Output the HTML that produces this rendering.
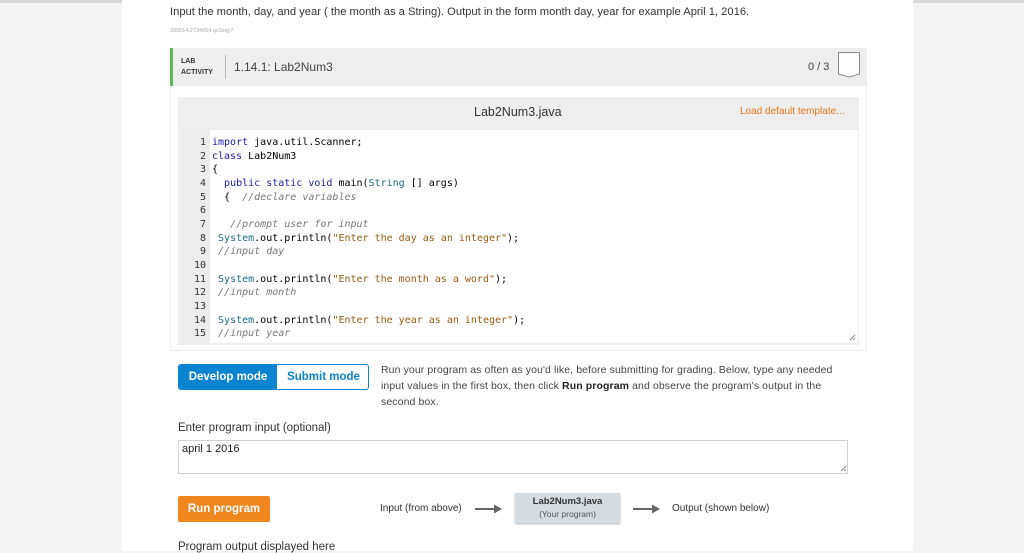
<!DOCTYPE html>
<html><head><meta charset="utf-8"><style>
body{margin:0;width:1024px;height:551px;overflow:hidden;background:#f4f4f4;font-family:"Liberation Sans",sans-serif;position:relative}
.page{position:absolute;left:122px;top:0;width:791px;height:551px;background:#fff}
.topbar{position:absolute;left:0;top:0;width:1024px;height:3px;background:#d8d8d8}
.a{position:absolute;white-space:nowrap}
.code{font-family:"DejaVu Sans Mono","Liberation Mono",monospace;font-size:10px;line-height:13.65px;color:#000}
.kw{color:#1a1aa6}.ty{color:#1b6b82}.st{color:#9a5a12}.cm{color:#777;font-style:italic}
</style></head><body>
<div class="topbar"></div>
<div class="page"></div>
<div class="a" style="left:170px;top:6px;font-size:11.2px;color:#333">Input the month, day, and year ( the month as a String). Output in the form month day, year for example April 1, 2016.</div>
<div class="a" style="left:170px;top:28px;font-size:5.5px;color:#aaa">395614.2734054.qx3zqy7</div>
<div class="a" style="left:170px;top:48px;width:697px;height:38px;background:#eeeeee;border-left:3px solid #5cb85c;box-sizing:border-box"></div>
<div class="a" style="left:181px;top:56px;font-size:7px;font-weight:bold;color:#333;line-height:11px">LAB<br>ACTIVITY</div>
<div class="a" style="left:225px;top:55px;width:1px;height:24px;background:#bbb"></div>
<div class="a" style="left:234px;top:60px;font-size:12px;color:#444">1.14.1: Lab2Num3</div>
<div class="a" style="left:808px;top:61px;font-size:11px;color:#444">0 / 3</div>
<svg class="a" style="left:837px;top:51px" width="25" height="28"><path d="M1.5 1.5H22.5V23L12 26L1.5 23Z" fill="#fff" stroke="#888" stroke-width="1"/></svg>
<div class="a" style="left:170px;top:86px;width:697px;height:265px;border:1px solid #eee;border-top:none;box-sizing:border-box"></div>
<div class="a" style="left:178px;top:97px;width:681px;height:248px;background:#eeeeee"></div>
<div class="a" style="left:474px;top:105px;font-size:12.5px;color:#333">Lab2Num3.java</div>
<div class="a" style="left:740px;top:106px;font-size:10px;color:#e8761f">Load default template...</div>
<div class="a" style="left:182px;top:130px;width:676px;height:213px;background:#fff;overflow:hidden"></div>
<div class="a" style="left:182px;top:130px;width:28px;height:213px;background:#ececec"></div>
<div class="a code" style="left:182px;top:136px;width:24px;text-align:right;color:#333;height:207px;overflow:hidden">1<br>2<br>3<br>4<br>5<br>6<br>7<br>8<br>9<br>10<br>11<br>12<br>13<br>14<br>15<br>16</div>
<div class="a code" style="left:212px;top:136px">
<span class="kw">import</span> java.util.Scanner;<br>
<span class="kw">class</span> Lab2Num3<br>
{<br>
&nbsp;&nbsp;<span class="kw">public static void</span> main(<span class="ty">String</span> [] args)<br>
&nbsp;&nbsp;{&nbsp;&nbsp;<span class="cm">//declare variables</span><br>
<br>
&nbsp;&nbsp;&nbsp;<span class="cm">//prompt user for input</span><br>
&nbsp;<span class="ty">System</span>.out.println(<span class="st">"Enter the day as an integer"</span>);<br>
&nbsp;<span class="cm">//input day</span><br>
<br>
&nbsp;<span class="ty">System</span>.out.println(<span class="st">"Enter the month as a word"</span>);<br>
&nbsp;<span class="cm">//input month</span><br>
<br>
&nbsp;<span class="ty">System</span>.out.println(<span class="st">"Enter the year as an integer"</span>);<br>
&nbsp;<span class="cm">//input year</span></div>
<svg class="a" style="left:848px;top:333px" width="8" height="8"><path d="M7 2L2 7M7 5L5 7" stroke="#888" stroke-width="1"/></svg>
<div class="a" style="left:178px;top:364px;width:191px;height:26px;border:1px solid #0a84d0;border-radius:3px;box-sizing:border-box;overflow:hidden">
<div style="position:absolute;left:0;top:0;width:98px;height:26px;background:#0a84d0;color:#fff;font-size:11.5px;font-weight:bold;line-height:25px;text-align:center">Develop mode</div>
<div style="position:absolute;left:98px;top:0;width:93px;height:26px;color:#0a84d0;font-size:11.5px;font-weight:bold;line-height:25px;text-align:center">Submit mode</div></div>
<div class="a" style="left:381px;top:362px;width:468px;white-space:normal;font-size:10.5px;line-height:16px;color:#444;letter-spacing:0.1px">Run your program as often as you'd like, before submitting for grading. Below, type any needed input values in the first box, then click <b style="color:#222">Run program</b> and observe the program's output in the second box.</div>
<div class="a" style="left:178px;top:422px;font-size:11.5px;color:#333">Enter program input (optional)</div>
<div class="a" style="left:178px;top:440px;width:670px;height:34px;border:1px solid #d0d0d0;box-sizing:border-box"></div>
<svg class="a" style="left:839px;top:464px" width="8" height="8"><path d="M7 2L2 7M7 5L5 7" stroke="#888" stroke-width="1"/></svg>
<div class="a" style="left:182px;top:443px;font-size:11px;color:#222">april 1 2016</div>
<div class="a" style="left:178px;top:496px;width:92px;height:26px;background:#f0861e;border-radius:2px;color:#fff;font-size:11.5px;font-weight:bold;line-height:26px;text-align:center">Run program</div>
<div class="a" style="left:380px;top:503px;font-size:10px;color:#333">Input (from above)</div>
<svg class="a" style="left:475px;top:503px" width="30" height="12"><path d="M0 6H20" stroke="#666" stroke-width="2"/><path d="M19 1.5L27 6L19 10.5Z" fill="#666"/></svg>
<div class="a" style="left:515px;top:493px;width:105px;height:30px;background:#d5dce1;box-shadow:0 1px 2px rgba(0,0,0,.3);text-align:center"><div style="font-size:9.5px;font-weight:bold;color:#333;margin-top:3px">Lab2Num3.java</div><div style="font-size:8.5px;color:#555;margin-top:2px">(Your program)</div></div>
<svg class="a" style="left:633px;top:503px" width="30" height="12"><path d="M0 6H20" stroke="#666" stroke-width="2"/><path d="M19 1.5L27 6L19 10.5Z" fill="#666"/></svg>
<div class="a" style="left:672px;top:503px;font-size:10px;color:#333">Output (shown below)</div>
<div class="a" style="left:178px;top:541px;font-size:11.5px;color:#333">Program output displayed here</div>
</body></html>
